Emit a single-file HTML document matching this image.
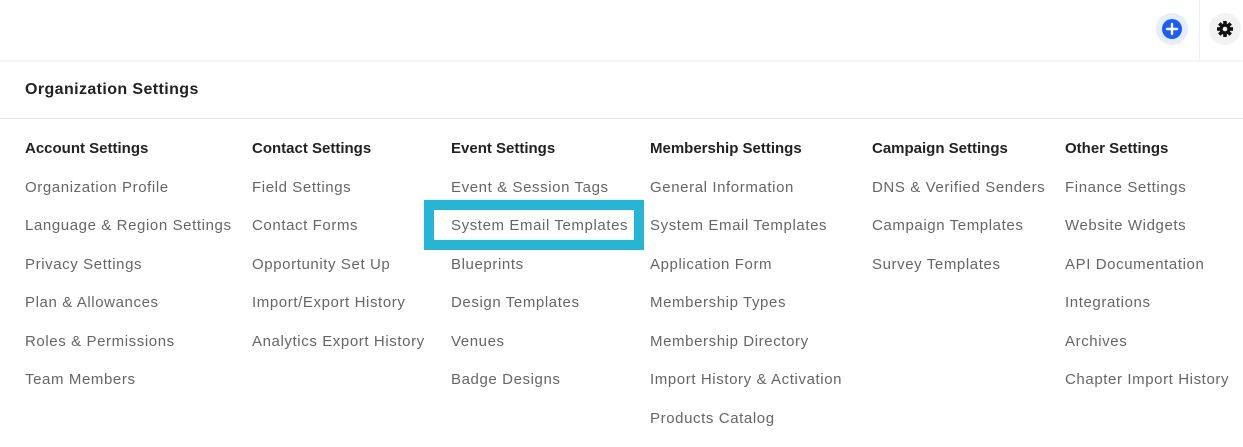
<!DOCTYPE html>
<html><head><style>
body{margin:0;width:1243px;height:446px;background:#fff;font-family:"Liberation Sans",sans-serif;overflow:hidden;position:relative}
.top{position:absolute;left:0;top:0;width:1243px;height:60px;background:#fff;box-shadow:0 1px 3px rgba(0,0,0,0.08)}
.title{position:absolute;left:25px;top:81px;font-size:16px;font-weight:bold;color:#222;letter-spacing:0.4px}
.sep{position:absolute;left:0;top:118px;width:1243px;height:1px;background:#e6e6e6}
.col{position:absolute;top:139px}
.col div{height:38.5px;font-size:15px;color:#666;white-space:nowrap;line-height:20px;letter-spacing:0.6px}
.col div.h{color:#222;font-weight:bold;letter-spacing:0}
.box{position:absolute;left:424px;top:200px;width:200px;height:30px;border:10px solid #25b5d5}
</style></head><body>
<div class="top"></div>
<div style="position:absolute;left:1199px;top:0;width:1px;height:60px;background:#eef0f5"></div>
<svg style="position:absolute;left:1155px;top:12px" width="34" height="34"><circle cx="17" cy="17" r="16" fill="#e6eefc"/><circle cx="17" cy="17" r="10" fill="#1a5cff"/><path d="M17 12v10M12 17h10" stroke="#fff" stroke-width="2.4" stroke-linecap="round"/></svg>
<svg style="position:absolute;left:1208px;top:12px" width="34" height="34"><circle cx="17" cy="17" r="16" fill="#f2f2f2"/><g transform="translate(17 17)" fill="#111"><circle r="5.5"/><g><rect x="-1.8" y="-8" width="3.6" height="16"/><rect x="-1.8" y="-8" width="3.6" height="16" transform="rotate(45)"/><rect x="-1.8" y="-8" width="3.6" height="16" transform="rotate(90)"/><rect x="-1.8" y="-8" width="3.6" height="16" transform="rotate(135)"/></g><circle r="2.3" fill="#f2f2f2"/></g></svg>
<div class="title">Organization Settings</div>
<div class="sep"></div>
<div class="box"></div>
<div class="col" style="left:25px"><div class="h">Account Settings</div><div>Organization Profile</div><div>Language &amp; Region Settings</div><div>Privacy Settings</div><div>Plan &amp; Allowances</div><div>Roles &amp; Permissions</div><div>Team Members</div></div>
<div class="col" style="left:252px"><div class="h">Contact Settings</div><div>Field Settings</div><div>Contact Forms</div><div>Opportunity Set Up</div><div>Import/Export History</div><div>Analytics Export History</div></div>
<div class="col" style="left:451px"><div class="h">Event Settings</div><div>Event &amp; Session Tags</div><div>System Email Templates</div><div>Blueprints</div><div>Design Templates</div><div>Venues</div><div>Badge Designs</div></div>
<div class="col" style="left:650px"><div class="h">Membership Settings</div><div>General Information</div><div>System Email Templates</div><div>Application Form</div><div>Membership Types</div><div>Membership Directory</div><div>Import History &amp; Activation</div><div>Products Catalog</div></div>
<div class="col" style="left:872px"><div class="h">Campaign Settings</div><div>DNS &amp; Verified Senders</div><div>Campaign Templates</div><div>Survey Templates</div></div>
<div class="col" style="left:1065px"><div class="h">Other Settings</div><div>Finance Settings</div><div>Website Widgets</div><div>API Documentation</div><div>Integrations</div><div>Archives</div><div>Chapter Import History</div></div>
</body></html>
